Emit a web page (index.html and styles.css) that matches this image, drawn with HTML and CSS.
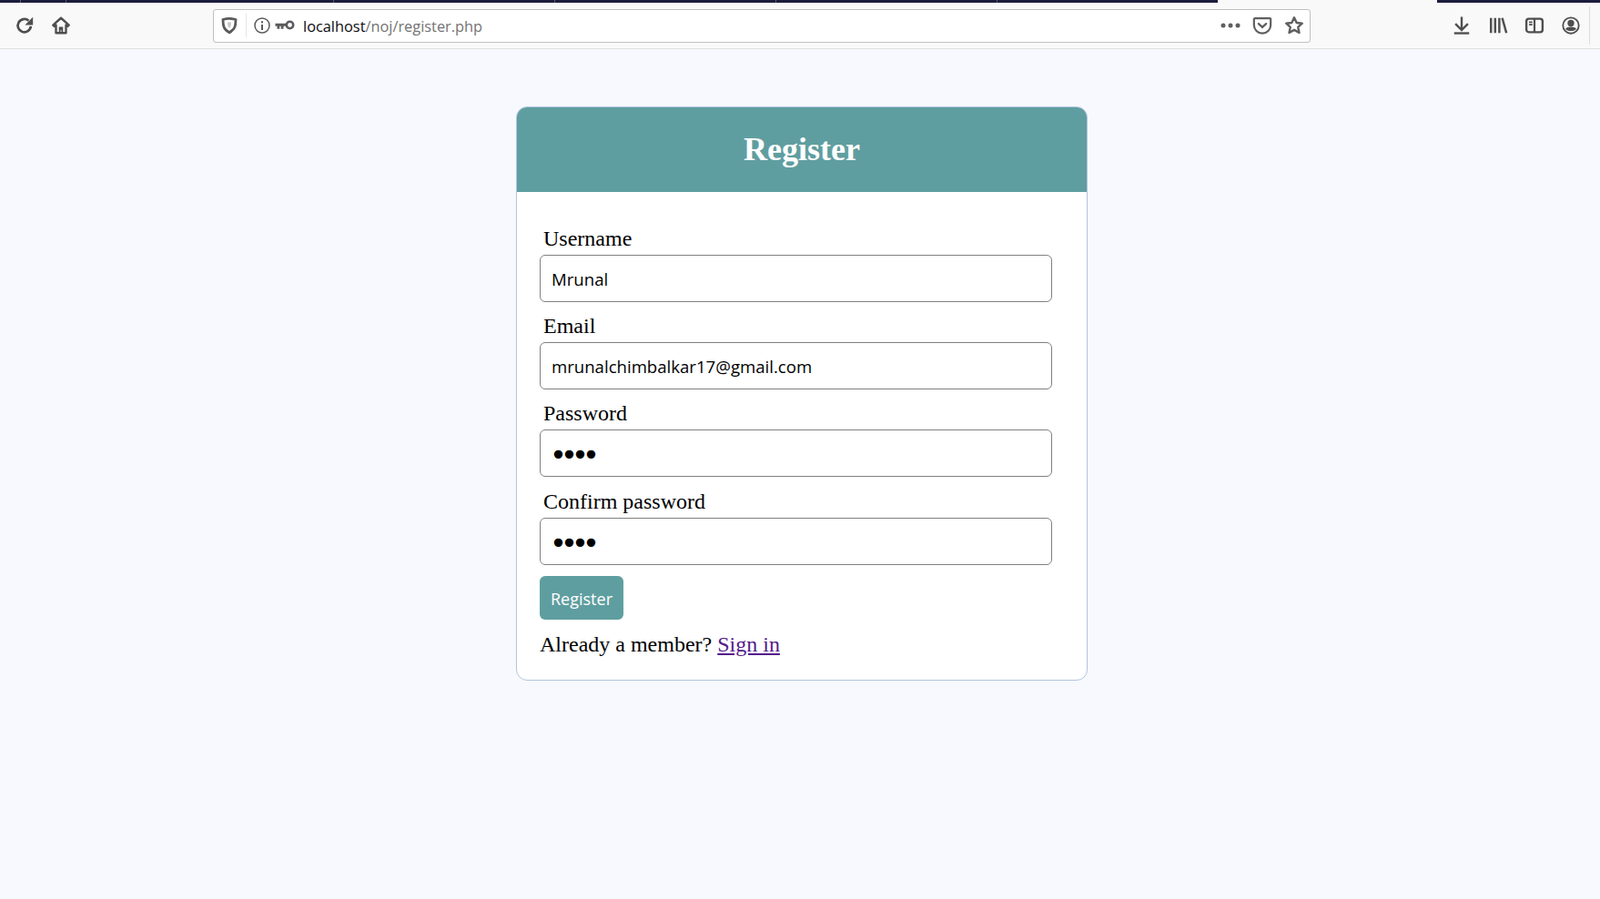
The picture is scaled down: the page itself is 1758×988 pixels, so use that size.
FILE: index.html
```html
<!DOCTYPE html>
<html lang="en">
<head>
<meta charset="UTF-8" />
<meta name="viewport" content="width=device-width, initial-scale=1.0">
<title>Register</title>
<link rel="stylesheet" href="styles.css">
</head>
<body>

<!-- Browser chrome -->
<div class="tabstrip">
  <span class="tab-seg seg-1"></span>
  <span class="tab-seg seg-2"></span>
  <span class="tab-seg seg-3"></span>
  <span class="tab-seg seg-4"></span>
  <span class="tab-seg seg-4"></span>
  <span class="tab-seg seg-4"></span>
  <span class="tab-seg seg-5"></span>
  <span class="tab-gap"></span>
  <span class="tab-seg seg-6"></span>
</div>
<div class="toolbar">
  <div class="nav-icons">
    <svg class="icon" viewBox="0 0 24 24"><path d="M19.500 13a7.800 7.800 0 1 1-2.600-6.700" fill="none" stroke="#4f4f50" stroke-width="3"/><path d="M22 2v9.500h-9.500z" fill="#4f4f50"/></svg>
    <svg class="icon" viewBox="0 0 24 24"><path d="M12 3 2.500 11.500l1.500 1.500 2-1.500V21h12v-9.500l2 1.500 1.500-1.500z" fill="none" stroke="#4f4f50" stroke-width="2.600" stroke-linejoin="round"/><path d="M9.500 21v-7.500h5V21h-2v-3.500h-1V21z" fill="#4f4f50"/></svg>
  </div>
  <div class="urlbar">
    <div class="url-left">
      <svg class="icon-sm" viewBox="0 0 20 20"><path d="M3 3.500C7 2.300 13 2.300 17 3.500c0 6.500-.5 10.500-7 14.300C3.500 14 3 10 3 3.500z" fill="none" stroke="#5b5b5c" stroke-width="2.800"/><path d="M8 6.500h4c0 3-.3 4.800-2 6.500-1.700-1.700-2-3.500-2-6.500z" fill="#c9c9ca"/></svg>
    </div>
    <svg class="icon-sm info" viewBox="0 0 20 20"><circle cx="10" cy="10" r="8" fill="none" stroke="#5b5b5c" stroke-width="1.500"/><rect x="9" y="9" width="2" height="6" fill="#5b5b5c"/><rect x="9" y="5.200" width="2" height="2.200" fill="#5b5b5c"/></svg>
    <svg class="icon-key" viewBox="0 0 22 12"><circle cx="16.500" cy="5.500" r="3.700" fill="none" stroke="#5b5b5c" stroke-width="2.600"/><path d="M13 3.800H.5v3h2v3h2.800v-3h1.400v3h2.800v-3H13z" fill="#5b5b5c"/></svg>
    <span class="url-text">localhost<span class="url-path">/noj/register.php</span></span>
    <div class="url-right">
      <svg class="icon-dots" viewBox="0 0 22 6"><circle cx="3" cy="3" r="2.500" fill="#5f5f60"/><circle cx="11" cy="3" r="2.500" fill="#5f5f60"/><circle cx="19" cy="3" r="2.500" fill="#5f5f60"/></svg>
      <svg class="icon" viewBox="0 0 24 24"><path d="M3 3.500h18a1 1 0 0 1 1 1v7a10 10 0 0 1-20 0v-7a1 1 0 0 1 1-1z" fill="none" stroke="#5f5f60" stroke-width="2.400"/><path d="m7.500 10 4.500 4 4.500-4" fill="none" stroke="#5f5f60" stroke-width="2.600" stroke-linecap="round"/></svg>
      <svg class="icon" viewBox="0 0 24 24"><path d="m12 2.500 2.900 6.200 6.700.8-5 4.500 1.400 6.700L12 17.300l-6 3.400 1.400-6.700-5-4.500 6.700-.8z" fill="none" stroke="#5f5f60" stroke-width="2.600" stroke-linejoin="round"/></svg>
    </div>
  </div>
  <div class="tool-icons">
    <svg class="icon" viewBox="0 0 24 24"><path d="M12 1.500v15.500M4.500 10l7.500 7.500 7.500-7.500" fill="none" stroke="#4f4f50" stroke-width="2.600"/><rect x="3" y="20" width="18" height="2.600" fill="#4f4f50"/></svg>
    <svg class="icon" viewBox="0 0 24 24"><path d="M3.500 3v18M8.500 3v18M13.500 3v18M17 3l5 18" fill="none" stroke="#4f4f50" stroke-width="2.700"/></svg>
    <svg class="icon" viewBox="0 0 24 24"><rect x="2.300" y="4" width="19.400" height="16" rx="3" fill="none" stroke="#4f4f50" stroke-width="2.600"/><path d="M12 4v16" stroke="#4f4f50" stroke-width="2.400"/><path d="M5.500 8h4M5.500 11h4" stroke="#4f4f50" stroke-width="1.800"/></svg>
    <svg class="icon" viewBox="0 0 24 24"><circle cx="12" cy="12" r="9.500" fill="none" stroke="#4f4f50" stroke-width="2"/><circle cx="12" cy="9.300" r="4" fill="#4f4f50"/><path d="M5.500 16c2-3 11-3 13 0-2 3.500-11 3.500-13 0z" fill="#4f4f50"/></svg>
    <span class="tool-sep"></span>
  </div>
</div>

<!-- Register form -->
<main>
  <div class="card">
    <div class="card-header">
      <h2>Register</h2>
    </div>
    <form class="card-form">
      <div class="input-group">
        <label for="username">Username</label>
        <input id="username" type="text" value="Mrunal">
      </div>
      <div class="input-group">
        <label for="email">Email</label>
        <input id="email" type="text" value="mrunalchimbalkar17@gmail.com">
      </div>
      <div class="input-group group-wide">
        <label for="password">Password</label>
        <input id="password" class="pass" type="password" value="1234">
      </div>
      <div class="input-group">
        <label for="confirm">Confirm password</label>
        <input id="confirm" class="pass" type="password" value="1234">
      </div>
      <button type="button" class="btn">Register</button>
      <p class="signin">Already a member? <a href="#">Sign in</a></p>
    </form>
  </div>
</main>

</body>
</html>
```

FILE: styles.css
```css
/* Base styles */
body {
  margin: 0;
  background: #f8f9fe;
  font-family: 'Liberation Serif', serif;
  color: #000;
}

/* Browser chrome */
.tabstrip {
  display: flex;
  height: 3px;
  background: #f9f9fa;
}

.tab-seg {
  background: #1c1c3c;
  box-sizing: border-box;
  border-right: 1px solid #5a5a70;
}

.seg-1 { width: 23px; }
.seg-2 { width: 50px; }
.seg-3 { width: 294px; }
.seg-4 { width: 243px; }
.seg-5 { width: 242px; border-right: none; }
.tab-gap { width: 241px; }
.seg-6 { flex: 1; border-right: none; }

.toolbar {
  display: flex;
  align-items: center;
  height: 50px;
  background: #f9f9fa;
  border-bottom: 1px solid #dfdfe1;
}

.icon { width: 22px; height: 22px; }
.icon-sm { width: 20px; height: 20px; }
.icon-key { width: 22px; height: 12px; }
.icon-dots { width: 22px; height: 6px; }

.nav-icons {
  display: flex;
  gap: 18px;
  width: 234px;
  padding-left: 16px;
  box-sizing: border-box;
}

.urlbar {
  display: flex;
  align-items: center;
  width: 1206px;
  height: 37px;
  box-sizing: border-box;
  background: #fff;
  border: 1px solid #c0c0c2;
  border-radius: 3px;
}

.url-left {
  display: flex;
  align-items: center;
  width: 36px;
  height: 26px;
  padding-left: 7px;
  box-sizing: border-box;
  border-right: 1px solid #e4e4e6;
}

.info { margin-left: 7px; }
.icon-key { margin-left: 4px; }

.url-text {
  margin-left: 9px;
  padding-top: 1px;
  font-family: 'Open Sans', sans-serif;
  font-size: 16.35px;
  color: #0c0c0d;
}

.url-path { color: #737373; }

.url-right {
  display: flex;
  align-items: center;
  gap: 13px;
  margin-left: auto;
  padding-right: 6px;
}

.tool-icons {
  display: flex;
  align-items: center;
  gap: 18px;
  margin-left: 155px;
}

.tool-sep {
  height: 42px;
  margin-left: -9px;
  border-left: 1px solid #dcdcde;
}

/* Register card */
.card {
  width: 628px;
  box-sizing: border-box;
  margin: 63px 0 0 567px;
  background: #fff;
  border: 1px solid #b0c4de;
  border-radius: 12px;
  overflow: hidden;
}

.card-header {
  background: #5f9ea0;
  text-align: center;
  padding: 24px 0 25px;
}

.card-header h2 {
  margin: 0;
  font-size: 36px;
  line-height: 44px;
  font-weight: bold;
  color: #fff;
}

.card-form {
  padding: 33px 25px 21px;
}

.input-group {
  margin-bottom: 8px;
}

.group-wide {
  margin-bottom: 9px;
}

.input-group label {
  display: block;
  padding-left: 4px;
  font-size: 24px;
  line-height: 36px;
}

.input-group input {
  display: block;
  width: 563px;
  height: 52px;
  box-sizing: border-box;
  padding: 0 12px;
  font-family: 'Open Sans', sans-serif;
  font-size: 18.6px;
  color: #000;
  background: #fff;
  border: 1px solid #808080;
  border-radius: 6px;
}

/* bigger dots, pulled back together with letter-spacing */
.input-group input.pass {
  padding: 3px 0 0 10px;
  font-family: 'DejaVu Sans', sans-serif;
  font-size: 32px;
  letter-spacing: -6.9px;
}

.btn {
  display: block;
  width: 92px;
  height: 48px;
  margin-top: 12px;
  padding: 1px 0 0;
  font-family: 'Open Sans', sans-serif;
  font-size: 18px;
  color: #fff;
  background: #5f9ea0;
  border: none;
  border-radius: 6px;
}

.signin {
  margin: 9px 0 0;
  font-size: 24px;
  line-height: 36px;
}

.signin a { color: #551a8b; }
```
